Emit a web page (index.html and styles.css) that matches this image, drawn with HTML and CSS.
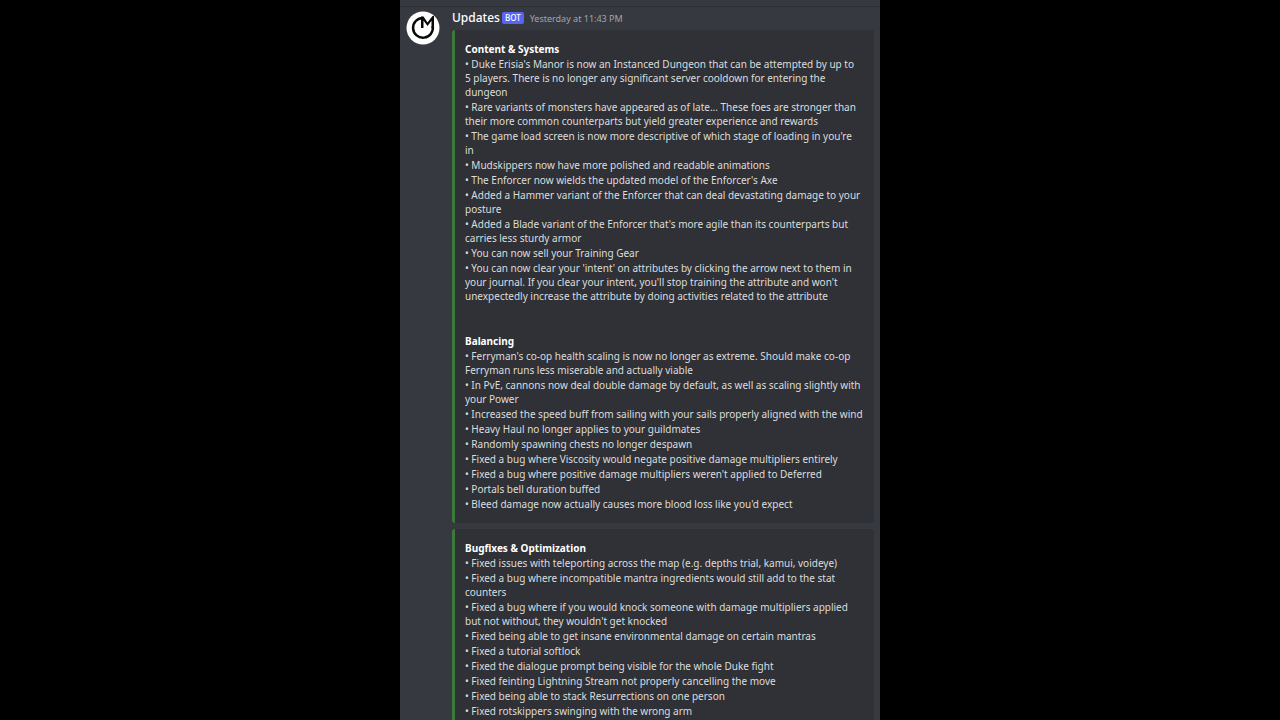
FILE: index.html
```
<!DOCTYPE html>
<html lang="en">
<head>
  <meta charset="UTF-8" />
  <meta name="viewport" content="width=device-width, initial-scale=1.0" />
  <title>Updates</title>
  <link rel="stylesheet" href="styles.css">
</head>
<body>
  <main class="chat">
    <article class="message">
      <svg class="avatar" viewBox="0 0 34 34" aria-hidden="true">
        <circle cx="17" cy="17" r="16.5" fill="#fff" />
        <path d="M17 6.900A9.900 9.900 0 1 0 26.700 15" fill="none" stroke="#08090a" stroke-width="2.500" />
        <path d="M15 17V5.500H17.500L21.500 11.500L26.500 5H28V17H25.500V9.800L21.500 15L17.500 9.500V17Z" fill="#08090a" />
      </svg>

      <div class="message-body">
        <header class="message-header">
          <h1>Updates</h1>
          <span class="bot-tag">BOT</span>
          <time>Yesterday at 11:43 PM</time>
        </header>

        <section class="embed">
          <!-- Content & Systems -->
          <div class="group">
            <h2>Content &amp; Systems</h2>
            <ul>
              <li>• Duke Erisia's Manor is now an Instanced Dungeon that can be attempted by up to<br>5 players. There is no longer any significant server cooldown for entering the<br>dungeon</li>
              <li>• Rare variants of monsters have appeared as of late... These foes are stronger than<br>their more common counterparts but yield greater experience and rewards</li>
              <li>• The game load screen is now more descriptive of which stage of loading in you're<br>in</li>
              <li>• Mudskippers now have more polished and readable animations</li>
              <li>• The Enforcer now wields the updated model of the Enforcer's Axe</li>
              <li>• Added a Hammer variant of the Enforcer that can deal devastating damage to your<br>posture</li>
              <li>• Added a Blade variant of the Enforcer that's more agile than its counterparts but<br>carries less sturdy armor</li>
              <li>• You can now sell your Training Gear</li>
              <li>• You can now clear your 'intent' on attributes by clicking the arrow next to them in<br>your journal. If you clear your intent, you'll stop training the attribute and won't<br>unexpectedly increase the attribute by doing activities related to the attribute</li>
            </ul>
          </div>

          <!-- Balancing -->
          <div class="group">
            <h2>Balancing</h2>
            <ul>
              <li>• Ferryman's co-op health scaling is now no longer as extreme. Should make co-op<br>Ferryman runs less miserable and actually viable</li>
              <li>• In PvE, cannons now deal double damage by default, as well as scaling slightly with<br>your Power</li>
              <li>• Increased the speed buff from sailing with your sails properly aligned with the wind</li>
              <li>• Heavy Haul no longer applies to your guildmates</li>
              <li>• Randomly spawning chests no longer despawn</li>
              <li>• Fixed a bug where Viscosity would negate positive damage multipliers entirely</li>
              <li>• Fixed a bug where positive damage multipliers weren't applied to Deferred</li>
              <li>• Portals bell duration buffed</li>
              <li>• Bleed damage now actually causes more blood loss like you'd expect</li>
            </ul>
          </div>
        </section>

        <section class="embed embed-last">
          <!-- Bugfixes & Optimization -->
          <div class="group">
            <h2>Bugfixes &amp; Optimization</h2>
            <ul>
              <li>• Fixed issues with teleporting across the map (e.g. depths trial, kamui, voideye)</li>
              <li>• Fixed a bug where incompatible mantra ingredients would still add to the stat<br>counters</li>
              <li>• Fixed a bug where if you would knock someone with damage multipliers applied<br>but not without, they wouldn't get knocked</li>
              <li>• Fixed being able to get insane environmental damage on certain mantras</li>
              <li>• Fixed a tutorial softlock</li>
              <li>• Fixed the dialogue prompt being visible for the whole Duke fight</li>
              <li>• Fixed feinting Lightning Stream not properly cancelling the move</li>
              <li>• Fixed being able to stack Resurrections on one person</li>
              <li>• Fixed rotskippers swinging with the wrong arm</li>
            </ul>
          </div>
        </section>
      </div>
    </article>
  </main>
</body>
</html>
```
FILE: styles.css
```
* {
  margin: 0;
  padding: 0;
  box-sizing: border-box;
}
body {
  background: #000;
  color: #dcddde;
  font-family: "Noto Sans", sans-serif;
  font-size: 10px;
  line-height: 14px;
}
.chat {
  display: flex;
  flex-direction: column;
  max-width: 480px;
  min-height: 100vh;
  margin: 0 auto;
  background: #36393f;
}
.chat::before {
  content: "";
  height: 6px;
  border-bottom: 1px solid #2d2f34;
}
.message {
  display: flex;
  flex: 1;
  gap: 12px;
  padding: 4px 6px 0;
}
.avatar {
  flex: none;
  width: 34px;
  height: 34px;
}
.message-body {
  display: flex;
  flex-direction: column;
  flex: 1;
  gap: 6px;
  min-width: 0;
}
.message-header {
  display: flex;
  align-items: center;
  height: 13px;
}
.message-header h1 {
  color: #fff;
  font-size: 12px;
  font-weight: 500;
}
.bot-tag {
  margin-left: 2px;
  padding: 0 3px;
  border-radius: 2px;
  background: #5865f2;
  color: #fff;
  font-size: 8px;
  font-weight: 500;
  line-height: 12px;
}
.message-header time {
  margin-left: 6px;
  padding-top: 3px;
  color: #a3a6aa;
  font-size: 9px;
}
.embed {
  padding: 12px 0 12px 10px;
  border-left: 3px solid #3b7a3b;
  border-radius: 3px;
  background: #2f3136;
  white-space: nowrap;
}
.embed-last {
  flex: 1;
  padding-bottom: 0;
  border-bottom-left-radius: 0;
  border-bottom-right-radius: 0;
}
.group + .group {
  margin-top: 31px;
}
.group h2 {
  color: #fff;
  font-size: 10px;
  font-weight: 700;
  line-height: 15px;
}
.group ul {
  display: flex;
  flex-direction: column;
  gap: 1px;
  list-style: none;
}
```
